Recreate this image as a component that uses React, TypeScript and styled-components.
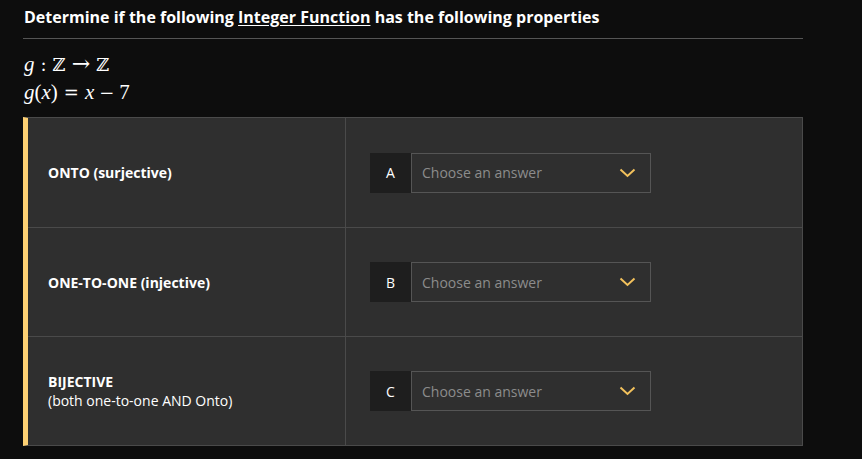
import * as React from 'react';
import styled, {createGlobalStyle} from 'styled-components';

const GlobalStyle = createGlobalStyle`
  html, body {
    margin: 0;
    padding: 0;
    background: #0d0d0d;
  }
  body {
    font-family: 'Open Sans', 'Liberation Sans', sans-serif;
    color: #fff;
  }
`;

const Page = styled.div`
  width: 780px;
  padding: 4px 0 0 23px;
`;

const Title = styled.h1`
  margin: 0;
  padding: 0 0 0 1px;
  font-size: 16px;
  font-weight: 700;
  line-height: 26px;
  color: #fff;
  a {
    color: #fff;
    text-decoration: underline;
    text-underline-offset: 2px;
  }
`;

const Rule = styled.hr`
  margin: 8px 0 0;
  border: none;
  border-top: 1px solid #555;
  height: 0;
`;

const MathBlock = styled.div`
  padding: 11px 0 0 1px;
  font-family: 'Liberation Serif', 'DejaVu Serif', serif;
  font-size: 21px;
  line-height: 28px;
  color: #fff;
`;

const MathLine = styled.div`
  height: 28px;
  white-space: nowrap;
`;

const Var = styled.i`
  font-style: italic;
`;

const Op = styled.span<{ gap?: number; size?: number }>`
  font-family: 'DejaVu Serif', serif;
  font-size: ${p => p.size ?? 18}px;
  line-height: 1;
  padding: 0 ${p => p.gap ?? 5}px;
`;

const Set = styled.span`
  font-family: 'DejaVu Serif', serif;
  font-size: 18px;
`;

const Table = styled.div`
  margin-top: 11px;
  border: 1px solid #4a4a4a;
  border-left: 5px solid #fdd073;
  background: #2f2f2f;
`;

const Row = styled.div`
  display: grid;
  grid-template-columns: 318px 1fr;
  height: 108px;
  &:first-child {
    height: 109px;
  }
  & + & {
    border-top: 1px solid #4a4a4a;
  }
`;

const LabelCell = styled.div`
  display: flex;
  flex-direction: column;
  justify-content: center;
  padding-left: 20px;
  border-right: 1px solid #4a4a4a;
  font-size: 14px;
  line-height: 19px;
  color: #fff;
`;

const LabelMain = styled.div`
  font-weight: 700;
`;

const LabelSub = styled.div`
  font-weight: 400;
`;

const AnswerCell = styled.div`
  display: flex;
  align-items: center;
  padding-left: 24px;
`;

const LetterBox = styled.div`
  width: 41px;
  height: 40px;
  display: flex;
  align-items: center;
  justify-content: center;
  background: #1e1e1e;
  font-size: 14px;
  color: #fff;
`;

const Select = styled.div`
  box-sizing: border-box;
  width: 240px;
  height: 40px;
  display: flex;
  align-items: center;
  justify-content: space-between;
  padding: 0 14px 0 10px;
  border: 1px solid #555;
  font-size: 14px;
  color: #8c8c8c;
  svg {
    display: block;
  }
`;

const Chevron = () => (
  <svg width="17" height="10" viewBox="0 0 17 10">
    <path d="M1.5 1.5 L8.5 8 L15.5 1.5" fill="none" stroke="#f2c15c" strokeWidth="2" />
  </svg>
);

interface Item {
  letter: string;
  main: string;
  sub?: string;
}

const items: Item[] = [
  {letter: 'A', main: 'ONTO (surjective)'},
  {letter: 'B', main: 'ONE-TO-ONE (injective)'},
  {letter: 'C', main: 'BIJECTIVE', sub: '(both one-to-one AND Onto)'},
];

const App: React.FC = () => (
  <>
    <GlobalStyle />
    <Page>
      <Title>
        Determine if the following <a>Integer Function</a> has the following properties
      </Title>
      <Rule />
      <MathBlock>
        <MathLine>
          <Var>g</Var>
          <Op gap={6}>:</Op>
          <Set>ℤ</Set>
          <Op gap={6} size={22}>→</Op>
          <Set>ℤ</Set>
        </MathLine>
        <MathLine>
          <Var>g</Var>(<Var>x</Var>)
          <Op gap={6}>=</Op>
          <Var>x</Var>
          <Op gap={5}>−</Op>7
        </MathLine>
      </MathBlock>
      <Table>
        {items.map(item => (
          <Row key={item.letter}>
            <LabelCell>
              <LabelMain>{item.main}</LabelMain>
              {item.sub && <LabelSub>{item.sub}</LabelSub>}
            </LabelCell>
            <AnswerCell>
              <LetterBox>{item.letter}</LetterBox>
              <Select>
                <span>Choose an answer</span>
                <Chevron />
              </Select>
            </AnswerCell>
          </Row>
        ))}
      </Table>
    </Page>
  </>
);

export default App;
